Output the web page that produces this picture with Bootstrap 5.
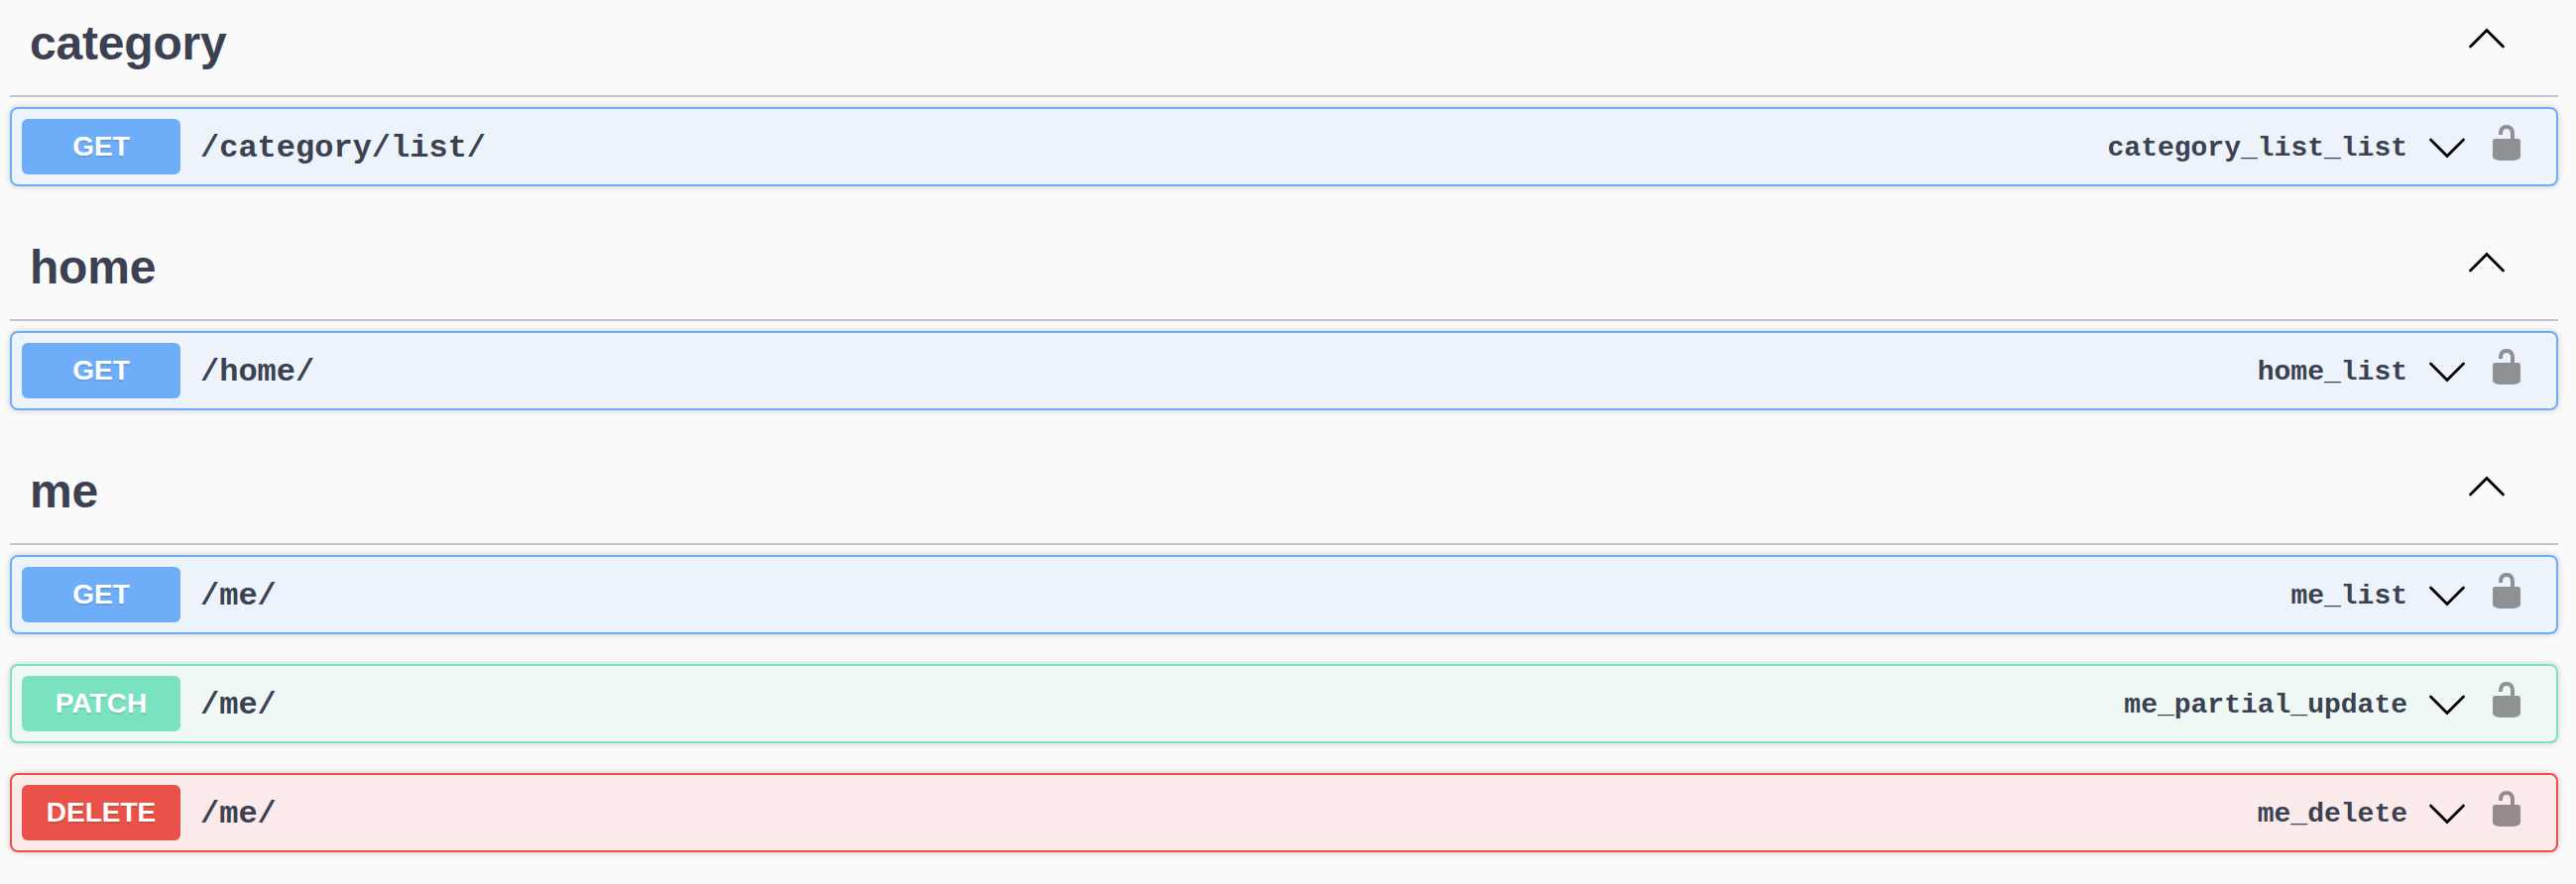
<!DOCTYPE html>
<html lang="en">
<head>
<meta charset="utf-8">
<title>API</title>
<link rel="stylesheet" href="https://cdn.jsdelivr.net/npm/bootstrap@5.3.0/dist/css/bootstrap.min.css">
<style>
html,body{background:#fafafa;}
body{color:#3b4151;font-family:"Liberation Sans",Arial,sans-serif;overflow:hidden;}
.api-page{padding:0 18px 0 10px;}
.tag-group{margin-bottom:38px;}
.tag-head{height:98px;border-bottom:2px solid #c4c5ca;padding:0 52px 0 20px;margin-bottom:10px;}
.tag-name{font-family:"Liberation Sans",Arial,sans-serif;font-size:48px;font-weight:700;line-height:1;margin:0 0 8px;color:#3b4151;letter-spacing:-.2px;}
.tag-toggle{width:40px;height:40px;margin-bottom:18px;}
.op-row{height:80px;border:2px solid;border-radius:8px;padding:0 10px;box-shadow:0 0 6px rgba(0,0,0,.19);}
.op-row + .op-row{margin-top:30px;}
.op-get{border-color:#6eadf8;background:#ecf3fb;}
.op-patch{border-color:#7ae1c1;background:#eff8f5;}
.op-delete{border-color:#ea5149;background:#faeaea;}
.op-method{width:160px;height:56px;border-radius:6px;color:#fff;font-size:28px;font-weight:700;text-shadow:0 2px 0 rgba(0,0,0,.1);}
.op-get .op-method{background:#6eadf8;}
.op-patch .op-method{background:#7ae1c1;}
.op-delete .op-method{background:#ea5149;}
.op-path{font-family:"Liberation Mono","Courier New",monospace;font-size:32px;font-weight:700;color:#3b4151;margin-left:20px;padding-top:3px;}
.op-id{font-family:"Liberation Mono","Courier New",monospace;font-size:28px;font-weight:700;color:#3b4151;padding-top:3px;}
.op-chevron{width:40px;height:40px;margin:0 20px 0 20px;}
.op-lock{width:40px;height:40px;margin:-8px 20px 0 0;fill:#000;opacity:.4;}
.chev-line{fill:none;stroke:#000;stroke-width:2.8;stroke-linecap:round;stroke-linejoin:miter;}
</style>
</head>
<body>
<svg width="0" height="0" class="d-block position-absolute">
  <defs>
    <symbol id="ico-up" viewBox="0 0 40 40"><polyline class="chev-line" points="3.5,28 20,11.5 36.5,28"/></symbol>
    <symbol id="ico-down" viewBox="0 0 40 40"><polyline class="chev-line" points="3.5,13 20,29.5 36.5,13"/></symbol>
    <symbol id="ico-lock" viewBox="0 0 20 20"><path d="M15.8 8H14V5.6C14 2.703 12.665 1 10 1 7.334 1 6 2.703 6 5.6V6h2v-.801C8 3.754 8.797 3 10 3c1.203 0 2 .754 2 2.199V8H4c-.553 0-1 .646-1 1.199V17c0 .549.428 1.139.951 1.307l1.197.387C5.672 18.861 6.55 19 7.1 19h5.8c.549 0 1.428-.139 1.951-.307l1.196-.387c.524-.167.953-.757.953-1.306V9.199C17 8.646 16.352 8 15.8 8z"/></symbol>
  </defs>
</svg>
<main class="api-page">

  <section class="tag-group">
    <div class="tag-head d-flex align-items-center justify-content-between">
      <h3 class="tag-name">category</h3>
      <svg class="tag-toggle"><use href="#ico-up"/></svg>
    </div>
    <div class="op-row op-get d-flex align-items-center">
      <span class="op-method d-flex align-items-center justify-content-center">GET</span>
      <span class="op-path">/category/list/</span>
      <span class="op-id ms-auto">category_list_list</span>
      <svg class="op-chevron"><use href="#ico-down"/></svg>
      <svg class="op-lock"><use href="#ico-lock"/></svg>
    </div>
  </section>

  <section class="tag-group">
    <div class="tag-head d-flex align-items-center justify-content-between">
      <h3 class="tag-name">home</h3>
      <svg class="tag-toggle"><use href="#ico-up"/></svg>
    </div>
    <div class="op-row op-get d-flex align-items-center">
      <span class="op-method d-flex align-items-center justify-content-center">GET</span>
      <span class="op-path">/home/</span>
      <span class="op-id ms-auto">home_list</span>
      <svg class="op-chevron"><use href="#ico-down"/></svg>
      <svg class="op-lock"><use href="#ico-lock"/></svg>
    </div>
  </section>

  <section class="tag-group">
    <div class="tag-head d-flex align-items-center justify-content-between">
      <h3 class="tag-name">me</h3>
      <svg class="tag-toggle"><use href="#ico-up"/></svg>
    </div>
    <div class="op-row op-get d-flex align-items-center">
      <span class="op-method d-flex align-items-center justify-content-center">GET</span>
      <span class="op-path">/me/</span>
      <span class="op-id ms-auto">me_list</span>
      <svg class="op-chevron"><use href="#ico-down"/></svg>
      <svg class="op-lock"><use href="#ico-lock"/></svg>
    </div>
    <div class="op-row op-patch d-flex align-items-center">
      <span class="op-method d-flex align-items-center justify-content-center">PATCH</span>
      <span class="op-path">/me/</span>
      <span class="op-id ms-auto">me_partial_update</span>
      <svg class="op-chevron"><use href="#ico-down"/></svg>
      <svg class="op-lock"><use href="#ico-lock"/></svg>
    </div>
    <div class="op-row op-delete d-flex align-items-center">
      <span class="op-method d-flex align-items-center justify-content-center">DELETE</span>
      <span class="op-path">/me/</span>
      <span class="op-id ms-auto">me_delete</span>
      <svg class="op-chevron"><use href="#ico-down"/></svg>
      <svg class="op-lock"><use href="#ico-lock"/></svg>
    </div>
  </section>

</main>
<script src="https://cdn.jsdelivr.net/npm/bootstrap@5.3.0/dist/js/bootstrap.bundle.min.js"></script>
</body>
</html>
